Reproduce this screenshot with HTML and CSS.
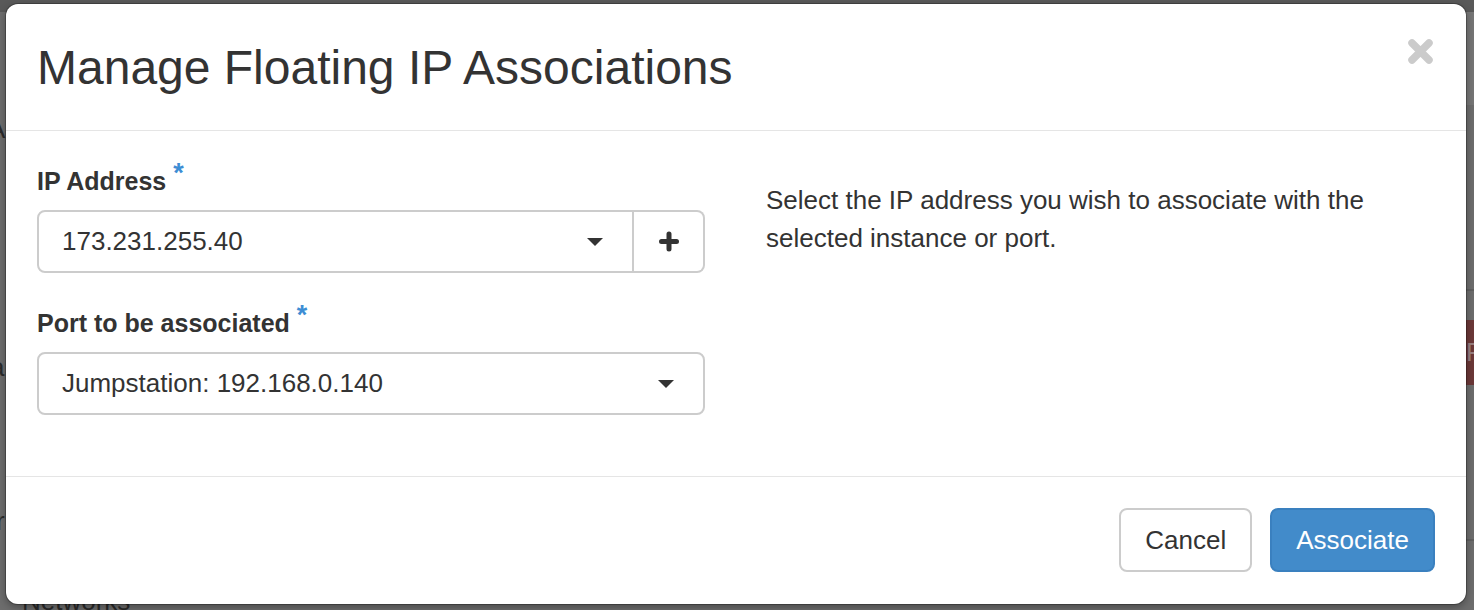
FILE: index.html
```html
<!DOCTYPE html>
<html lang="en">
<head>
  <meta charset="UTF-8">
  <title>Manage Floating IP Associations</title>
  <link rel="stylesheet" href="styles.css">
</head>
<body>
  <!-- Page behind the backdrop (only edges are visible) -->
  <div class="page-behind">
    <div class="topbar"></div>
    <div class="side-band"></div>
    <div class="side-line side-line-1"></div>
    <div class="side-line side-line-2"></div>
    <div class="danger-btn">R</div>
    <span class="frag frag-a1">A</span>
    <span class="frag frag-a2">a</span>
    <span class="frag frag-r">r</span>
    <span class="frag frag-net">Networks</span>
  </div>

  <div class="modal">
    <div class="modal-header">
      <h3 class="modal-title">Manage Floating IP Associations</h3>
      <button class="close" aria-label="Close">
        <svg width="27" height="27" viewBox="0 0 27 27">
          <path d="M5 5 L22 22 M22 5 L5 22" stroke="#cbcbcb" stroke-width="7.5" stroke-linecap="round" fill="none"/>
        </svg>
      </button>
    </div>

    <div class="modal-body">
      <div class="left-col">
        <div class="form-group">
          <label class="field-label">IP Address <span class="required">*</span></label>
          <div class="input-group">
            <div class="select grouped">
              <span>173.231.255.40</span>
              <span class="caret"></span>
            </div>
            <button class="add-btn" aria-label="Add">
              <svg width="22" height="21" viewBox="0 0 22 21">
                <path d="M11 3 V18 M3.5 10.5 H18.5" stroke="#333" stroke-width="5" stroke-linecap="round" fill="none"/>
              </svg>
            </button>
          </div>
        </div>
        <div class="form-group">
          <label class="field-label">Port to be associated <span class="required">*</span></label>
          <div class="select">
            <span>Jumpstation: 192.168.0.140</span>
            <span class="caret"></span>
          </div>
        </div>
      </div>
      <div class="right-col">
        <p>Select the IP address you wish to associate with the selected instance or port.</p>
      </div>
    </div>

    <div class="modal-footer">
      <button class="btn btn-default">Cancel</button>
      <button class="btn btn-primary">Associate</button>
    </div>
  </div>
</body>
</html>
```

FILE: styles.css
```css
/* General */
html, body {
  height: 100%;
}
body {
  margin: 0;
  padding: 4px 8px 0 6px;
  box-sizing: border-box;
  background-color: #6d6d6d;
  font-family: "Liberation Sans", Arial, sans-serif;
  color: #333;
  position: relative;
  overflow: hidden;
}

/* Background page, seen through the backdrop */
.page-behind .topbar {
  position: absolute;
  left: 0;
  top: 0;
  width: 100%;
  height: 12px;
  background-color: #595959;
}
.page-behind .side-band {
  position: absolute;
  right: 0;
  top: 12px;
  width: 10px;
  height: 93px;
  background-color: #767676;
}
.page-behind .side-line {
  position: absolute;
  right: 0;
  width: 10px;
  height: 2px;
  background-color: #5f5f5f;
}
.side-line-1 { top: 289px; }
.side-line-2 { top: 539px; }
.page-behind .danger-btn {
  position: absolute;
  right: 0;
  top: 320px;
  width: 10px;
  height: 65px;
  background-color: #6c3838;
  color: #9a8080;
  font-size: 26px;
  line-height: 65px;
  text-indent: 2px;
  overflow: hidden;
}
.frag {
  position: absolute;
  color: #2b2b2b;
  font-size: 26px;
  line-height: 30px;
}
.frag-a1 { left: -12px; top: 114px; }
.frag-a2 { left: -10px; top: 352px; }
.frag-r  { left: -4px;  top: 506px; }
.frag-net { left: 22px; top: 586px; }

/* Modal */
.modal {
  position: relative;
  z-index: 1;
  width: 1460px;
  height: 600px;
  background-color: #fff;
  border-radius: 12px;
  box-shadow: 0 0 0 1px rgba(0, 0, 0, 0.25), 0 3px 8px rgba(0, 0, 0, 0.35);
  display: flex;
  flex-direction: column;
}
.modal-header {
  height: 126px;
  border-bottom: 1px solid #e5e5e5;
  display: flex;
  align-items: center;
  justify-content: space-between;
  padding: 0 32px 0 31px;
}
.modal-title {
  margin: 0;
  font-size: 48px;
  font-weight: normal;
  color: #333;
}
.close {
  align-self: flex-start;
  margin-top: 34px;
  padding: 0;
  border: none;
  background: none;
  cursor: pointer;
  line-height: 0;
}

.modal-body {
  height: 346px;
  box-sizing: border-box;
  border-bottom: 1px solid #e5e5e5;
  padding: 34px 31px 0 31px;
  display: grid;
  grid-template-columns: 668px 1fr;
  column-gap: 61px;
}
.form-group {
  margin-bottom: 34px;
}
.field-label {
  display: block;
  font-size: 25px;
  line-height: 32px;
  font-weight: bold;
  margin-bottom: 13px;
}
.required {
  color: #3d8dd4;
  font-size: 27px;
  line-height: 0;
  vertical-align: 8px;
}

/* Select boxes */
.input-group {
  display: flex;
}
.select {
  height: 63px;
  box-sizing: border-box;
  border: 2px solid #cccccc;
  border-radius: 8px;
  display: flex;
  align-items: center;
  justify-content: space-between;
  padding: 0 29px 0 23px;
  font-size: 26px;
  color: #333;
}
.select.grouped {
  flex: 1;
  border-radius: 8px 0 0 8px;
}
.caret {
  width: 0;
  height: 0;
  border-left: 8px solid transparent;
  border-right: 8px solid transparent;
  border-top: 8px solid #333;
}
.add-btn {
  width: 71px;
  height: 63px;
  box-sizing: border-box;
  border: 2px solid #cccccc;
  border-left: none;
  border-radius: 0 8px 8px 0;
  background-color: #fff;
  padding: 0;
  display: flex;
  align-items: center;
  justify-content: center;
  cursor: pointer;
}

.right-col p {
  margin: 16px 0 0 0;
  font-size: 26px;
  line-height: 38px;
  color: #333;
}

/* Footer */
.modal-footer {
  flex: 1;
  display: flex;
  justify-content: flex-end;
  align-items: flex-start;
  gap: 18px;
  padding: 31px 31px 0 0;
}
.btn {
  height: 64px;
  padding: 0 24px;
  font-family: "Liberation Sans", Arial, sans-serif;
  font-size: 26px;
  border-radius: 8px;
  cursor: pointer;
}
.btn-default {
  background-color: #fff;
  border: 2px solid #cccccc;
  color: #333;
}
.btn-primary {
  background-color: #428bca;
  border: 2px solid #3a80bf;
  color: #fff;
  padding: 0 24px;
}
```
